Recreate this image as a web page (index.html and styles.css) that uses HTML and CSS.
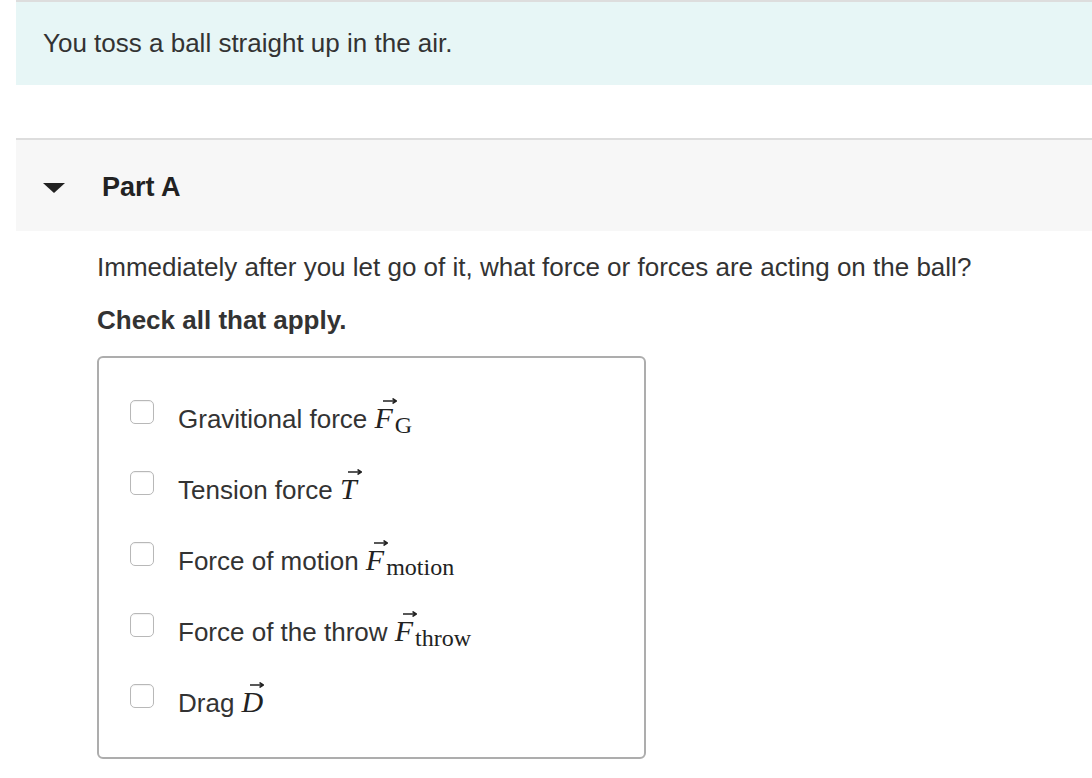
FILE: index.html
```html
<!DOCTYPE html>
<html lang="en">
<head>
    <meta charset="UTF-8">
    <title>Part A</title>
    <link rel="stylesheet" href="styles.css">
</head>
<body>

<div class="page">
    <div class="intro">You toss a ball straight up in the air.</div>

    <div class="part">
        <div class="part-head">
            <span class="caret"></span>
            <h2>Part A</h2>
        </div>

        <div class="part-body">
            <p class="question">Immediately after you let go of it, what force or forces are acting on the ball?</p>
            <p class="hint">Check all that apply.</p>

            <div class="choices">
                <label class="choice">
                    <span class="check"></span>
                    <span class="text">Gravitional force <span class="math"><span class="vec">F<svg class="arrow" viewBox="0 0 14 6"><path d="M0 3H13M9.5 0.5L13.5 3L9.5 5.5"/></svg></span><span class="sub">G</span></span></span>
                </label>
                <label class="choice">
                    <span class="check"></span>
                    <span class="text">Tension force <span class="math"><span class="vec">T<svg class="arrow" viewBox="0 0 14 6"><path d="M0 3H13M9.5 0.5L13.5 3L9.5 5.5"/></svg></span></span></span>
                </label>
                <label class="choice">
                    <span class="check"></span>
                    <span class="text">Force of motion <span class="math"><span class="vec">F<svg class="arrow" viewBox="0 0 14 6"><path d="M0 3H13M9.5 0.5L13.5 3L9.5 5.5"/></svg></span><span class="sub">motion</span></span></span>
                </label>
                <label class="choice">
                    <span class="check"></span>
                    <span class="text">Force of the throw <span class="math"><span class="vec">F<svg class="arrow" viewBox="0 0 14 6"><path d="M0 3H13M9.5 0.5L13.5 3L9.5 5.5"/></svg></span><span class="sub">throw</span></span></span>
                </label>
                <label class="choice">
                    <span class="check"></span>
                    <span class="text">Drag <span class="math"><span class="vec">D<svg class="arrow" viewBox="0 0 14 6"><path d="M0 3H13M9.5 0.5L13.5 3L9.5 5.5"/></svg></span></span></span>
                </label>
            </div>
        </div>
    </div>
</div>

</body>
</html>
```

FILE: styles.css
```css
body { margin: 0; background: #fff; color: #333; font-family: "Liberation Sans", Arial, sans-serif; font-size: 26px; line-height: 30px; }
.page { padding-left: 16px; }

.intro { background: #e7f6f6; border-top: 2px solid #ddd; padding: 26px 27px 27px; }

.part { margin-top: 53px; }
.part-head { display: flex; align-items: center; background: #f7f7f7; border-top: 2px solid #ddd; padding: 31px 26px 28px 27px; height: 32px; }
.part-head h2 { margin: 0 0 0 37px; font-size: 27px; line-height: 32px; font-weight: bold; color: #222; }
.caret { width: 0; height: 0; border-left: 11px solid transparent; border-right: 11px solid transparent; border-top: 10px solid #222; margin-top: 1px; }

.part-body { padding-left: 81px; }
.question { margin: 21px 0 0; }
.hint { margin: 23px 0 0; font-weight: bold; }

.choices {
    box-sizing: border-box;
    width: 549px;
    margin-top: 21px;
    border: 2px solid #adadad;
    border-radius: 6px;
    padding: 39px 0 34px 32px;
    display: flex;
    flex-direction: column;
    gap: 29px;
}
.choice { display: flex; align-items: flex-start; height: 42px; cursor: pointer; }
.check {
    width: 22px;
    height: 22px;
    margin-top: 3px;
    margin-left: -1px;
    border: 1px solid #b8b8b8;
    border-radius: 5px;
    background: #fff;
    box-shadow: inset 0 1px 1px rgba(0, 0, 0, 0.06);
    flex-shrink: 0;
}
.text { margin-left: 24px; padding-top: 6px; white-space: nowrap; }

.math { font-family: "Liberation Serif", "Times New Roman", serif; font-size: 30px; line-height: 30px; color: #222; }
.vec { position: relative; display: inline-block; font-style: italic; }
.vec .arrow { position: absolute; top: -5px; left: 8px; width: 14px; height: 6px; fill: none; stroke: #222; stroke-width: 1.5; }
.sub { font-size: 24px; position: relative; top: 5px; margin-left: 2px; }
```
